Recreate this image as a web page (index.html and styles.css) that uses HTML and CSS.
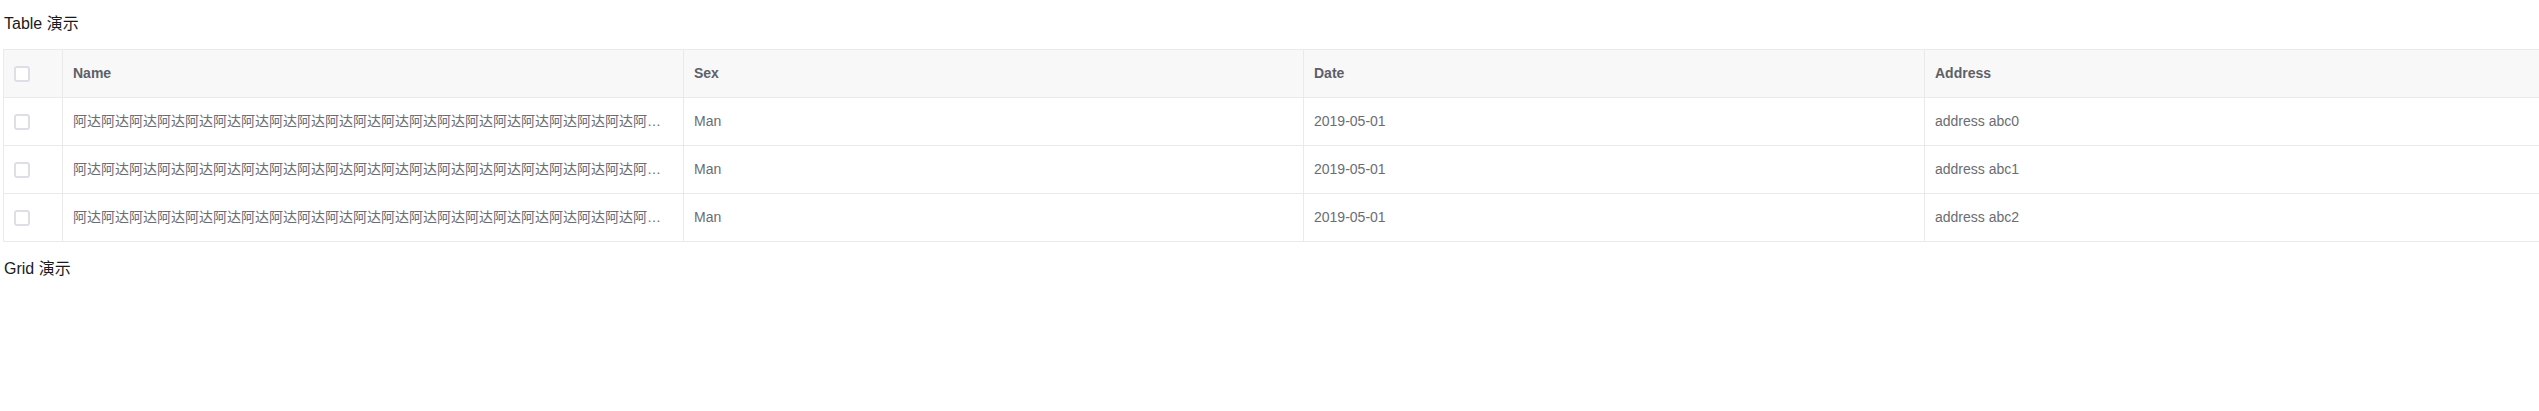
FILE: index.html
```html
<!DOCTYPE html>
<html lang="zh-CN">
<head>
    <meta charset="UTF-8">
    <meta name="viewport" content="width=device-width, initial-scale=1.0">
    <title>Table 演示</title>
    <link rel="stylesheet" href="styles.css">
</head>
<body>
    <div class="page">
        <p class="demo-title">Table 演示</p>
        <div class="table-wrap">
            <table class="vxe-table">
                <colgroup>
                    <col class="col-check">
                    <col class="col-name">
                    <col class="col-sex">
                    <col class="col-date">
                    <col class="col-address">
                </colgroup>
                <thead>
                    <tr>
                        <th><div class="cell"><span class="checkbox"></span></div></th>
                        <th><div class="cell">Name</div></th>
                        <th><div class="cell">Sex</div></th>
                        <th><div class="cell">Date</div></th>
                        <th><div class="cell">Address</div></th>
                    </tr>
                </thead>
                <tbody>
                    <tr>
                        <td><div class="cell"><span class="checkbox"></span></div></td>
                        <td><div class="cell ellipsis">阿达阿达阿达阿达阿达阿达阿达阿达阿达阿达阿达阿达阿达阿达阿达阿达阿达阿达阿达阿达阿达阿达阿达</div></td>
                        <td><div class="cell">Man</div></td>
                        <td><div class="cell">2019-05-01</div></td>
                        <td><div class="cell">address abc0</div></td>
                    </tr>
                    <tr>
                        <td><div class="cell"><span class="checkbox"></span></div></td>
                        <td><div class="cell ellipsis">阿达阿达阿达阿达阿达阿达阿达阿达阿达阿达阿达阿达阿达阿达阿达阿达阿达阿达阿达阿达阿达阿达阿达</div></td>
                        <td><div class="cell">Man</div></td>
                        <td><div class="cell">2019-05-01</div></td>
                        <td><div class="cell">address abc1</div></td>
                    </tr>
                    <tr>
                        <td><div class="cell"><span class="checkbox"></span></div></td>
                        <td><div class="cell ellipsis">阿达阿达阿达阿达阿达阿达阿达阿达阿达阿达阿达阿达阿达阿达阿达阿达阿达阿达阿达阿达阿达阿达阿达</div></td>
                        <td><div class="cell">Man</div></td>
                        <td><div class="cell">2019-05-01</div></td>
                        <td><div class="cell">address abc2</div></td>
                    </tr>
                </tbody>
            </table>
        </div>
        <p class="demo-title grid-title">Grid 演示</p>
    </div>
</body>
</html>
```

FILE: styles.css
```css
html, body {
    margin: 0;
    padding: 0;
    background-color: #fff;
    overflow: hidden;
}

body {
    font-family: "Liberation Sans", "Noto Sans CJK SC", sans-serif;
    color: #000;
}

.page {
    padding: 0 0 0 3px;
}

.demo-title {
    margin: 13px 0 14px 1px;
    font-size: 16px;
    line-height: 22px;
    color: #1a1a1a;
}

.grid-title {
    margin-top: 16px;
}

.table-wrap {
    overflow: hidden;
}

.vxe-table {
    table-layout: fixed;
    border-collapse: separate;
    border-spacing: 0;
    width: 2543px;
    border-top: 1px solid #e8eaec;
    border-left: 1px solid #e8eaec;
    font-size: 14px;
    color: #606266;
}

.col-check { width: 59px; }
.col-name { width: 621px; }
.col-sex { width: 620px; }
.col-date { width: 621px; }
.col-address { width: 621px; }

.vxe-table th,
.vxe-table td {
    box-sizing: border-box;
    padding: 12px 0;
    border-right: 1px solid #e8eaec;
    border-bottom: 1px solid #e8eaec;
    text-align: left;
    vertical-align: middle;
}

.vxe-table th {
    background-color: #f8f8f9;
    font-weight: bold;
    color: #5d6068;
}

.vxe-table td {
    color: #6a6d73;
}

.vxe-table .cell {
    padding: 0 10px;
    line-height: 23px;
    height: 23px;
    white-space: nowrap;
    display: flex;
    align-items: center;
}

.vxe-table .ellipsis {
    display: block;
    overflow: hidden;
    text-overflow: ellipsis;
}

.checkbox {
    display: inline-block;
    box-sizing: border-box;
    width: 16px;
    height: 16px;
    border: 2px solid #dcdfe6;
    border-radius: 3px;
    background-color: #fff;
}
```
